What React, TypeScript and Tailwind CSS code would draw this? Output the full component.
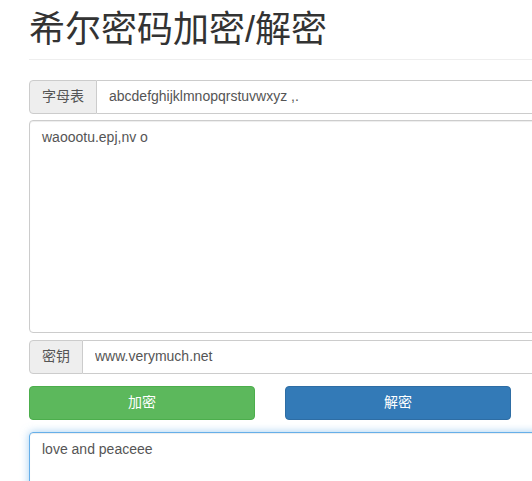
import { useState } from "react";

const font = { fontFamily: '"Liberation Sans", "Noto Sans CJK SC", Arial, sans-serif' };

function InputGroup({ label, value }: { label: string; value: string }) {
  return (
    <div className="flex h-[34px] w-[600px] text-[14px]">
      <span className="flex items-center px-[12px] bg-[#eee] border border-[#ccc] rounded-l-[4px] text-[#555] whitespace-nowrap">
        {label}
      </span>
      <input
        defaultValue={value}
        className="flex-1 min-w-0 px-[12px] border border-l-0 border-[#ccc] rounded-r-[4px] text-[#555] outline-none bg-white"
        style={font}
      />
    </div>
  );
}

export default function App() {
  const [cipher, setCipher] = useState("waoootu.epj,nv o");
  const [plain, setPlain] = useState("love and peaceee");

  return (
    <div className="w-[532px] h-[481px] overflow-hidden bg-white" style={font}>
      <div className="pl-[29px] w-[640px]">
        {/* Header */}
        <div className="pt-[10px] pb-[9px] mb-[20px] border-b border-[#eee]">
          <h1 className="text-[36px] leading-[39.6px] font-normal text-[#333]">希尔密码加密/解密</h1>
        </div>

        <InputGroup label="字母表" value="abcdefghijklmnopqrstuvwxyz ,." />

        <textarea
          value={cipher}
          onChange={(e) => setCipher(e.target.value)}
          className="block mt-[6px] w-[600px] h-[213px] px-[12px] py-[6px] text-[14px] leading-[20px] text-[#555] border border-[#ccc] rounded-[4px] resize-none outline-none shadow-[inset_0_1px_1px_rgba(0,0,0,0.075)]"
          style={font}
        />

        <div className="mt-[7px]">
          <InputGroup label="密钥" value="www.verymuch.net" />
        </div>

        {/* Actions */}
        <div className="mt-[12px] grid grid-cols-[226px_226px] gap-[30px]">
          <button className="h-[34px] rounded-[4px] bg-[#5cb85c] border border-[#4cae4c] text-white text-[14px]">
            加密
          </button>
          <button className="h-[34px] rounded-[4px] bg-[#337ab7] border border-[#2e6da4] text-white text-[14px]">
            解密
          </button>
        </div>

        <textarea
          value={plain}
          onChange={(e) => setPlain(e.target.value)}
          className="block mt-[12px] w-[600px] h-[120px] px-[12px] py-[6px] text-[14px] leading-[20px] text-[#555] border border-[#66afe9] rounded-[4px] resize-none outline-none shadow-[inset_0_1px_1px_rgba(0,0,0,0.075),0_0_8px_rgba(102,175,233,0.6)]"
          style={font}
        />
      </div>
    </div>
  );
}
